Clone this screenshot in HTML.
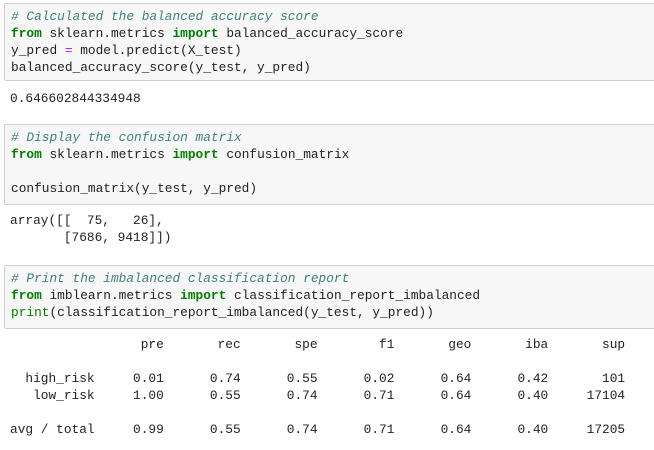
<!DOCTYPE html>
<html><head><style>
body{margin:0;background:#fff;width:654px;height:450px;overflow:hidden;font-family:"Liberation Mono",monospace;font-size:12.82px;color:#222;}
pre{margin:0;font:inherit;line-height:17px;white-space:pre;}
.box{position:absolute;left:4px;width:660px;background:#f7f7f7;border:1px solid #cfcfcf;border-radius:2px;box-sizing:border-box;padding:4px 0 0 6px;}
.out{position:absolute;left:10px;}
.c{color:#408080;font-style:italic}
.k{color:#008000;font-weight:bold}
.o{color:#aa22ff}
.b{color:#008000}
</style></head><body>
<div class="box" style="top:3px;height:78px"><pre><span class="c"># Calculated the balanced accuracy score</span>
<span class="k">from</span> sklearn.metrics <span class="k">import</span> balanced_accuracy_score
y_pred <span class="o">=</span> model.predict(X_test)
balanced_accuracy_score(y_test, y_pred)</pre></div>
<pre class="out" style="top:90px">0.646602844334948</pre>
<div class="box" style="top:124px;height:81px"><pre><span class="c"># Display the confusion matrix</span>
<span class="k">from</span> sklearn.metrics <span class="k">import</span> confusion_matrix

confusion_matrix(y_test, y_pred)</pre></div>
<pre class="out" style="top:212px">array([[  75,   26],
       [7686, 9418]])</pre>
<div class="box" style="top:265px;height:64px"><pre><span class="c"># Print the imbalanced classification report</span>
<span class="k">from</span> imblearn.metrics <span class="k">import</span> classification_report_imbalanced
<span class="b">print</span>(classification_report_imbalanced(y_test, y_pred))</pre></div>
<pre class="out" style="top:336px">                 pre       rec       spe        f1       geo       iba       sup

  high_risk     0.01      0.74      0.55      0.02      0.64      0.42       101
   low_risk     1.00      0.55      0.74      0.71      0.64      0.40     17104

avg / total     0.99      0.55      0.74      0.71      0.64      0.40     17205</pre>
</body></html>
